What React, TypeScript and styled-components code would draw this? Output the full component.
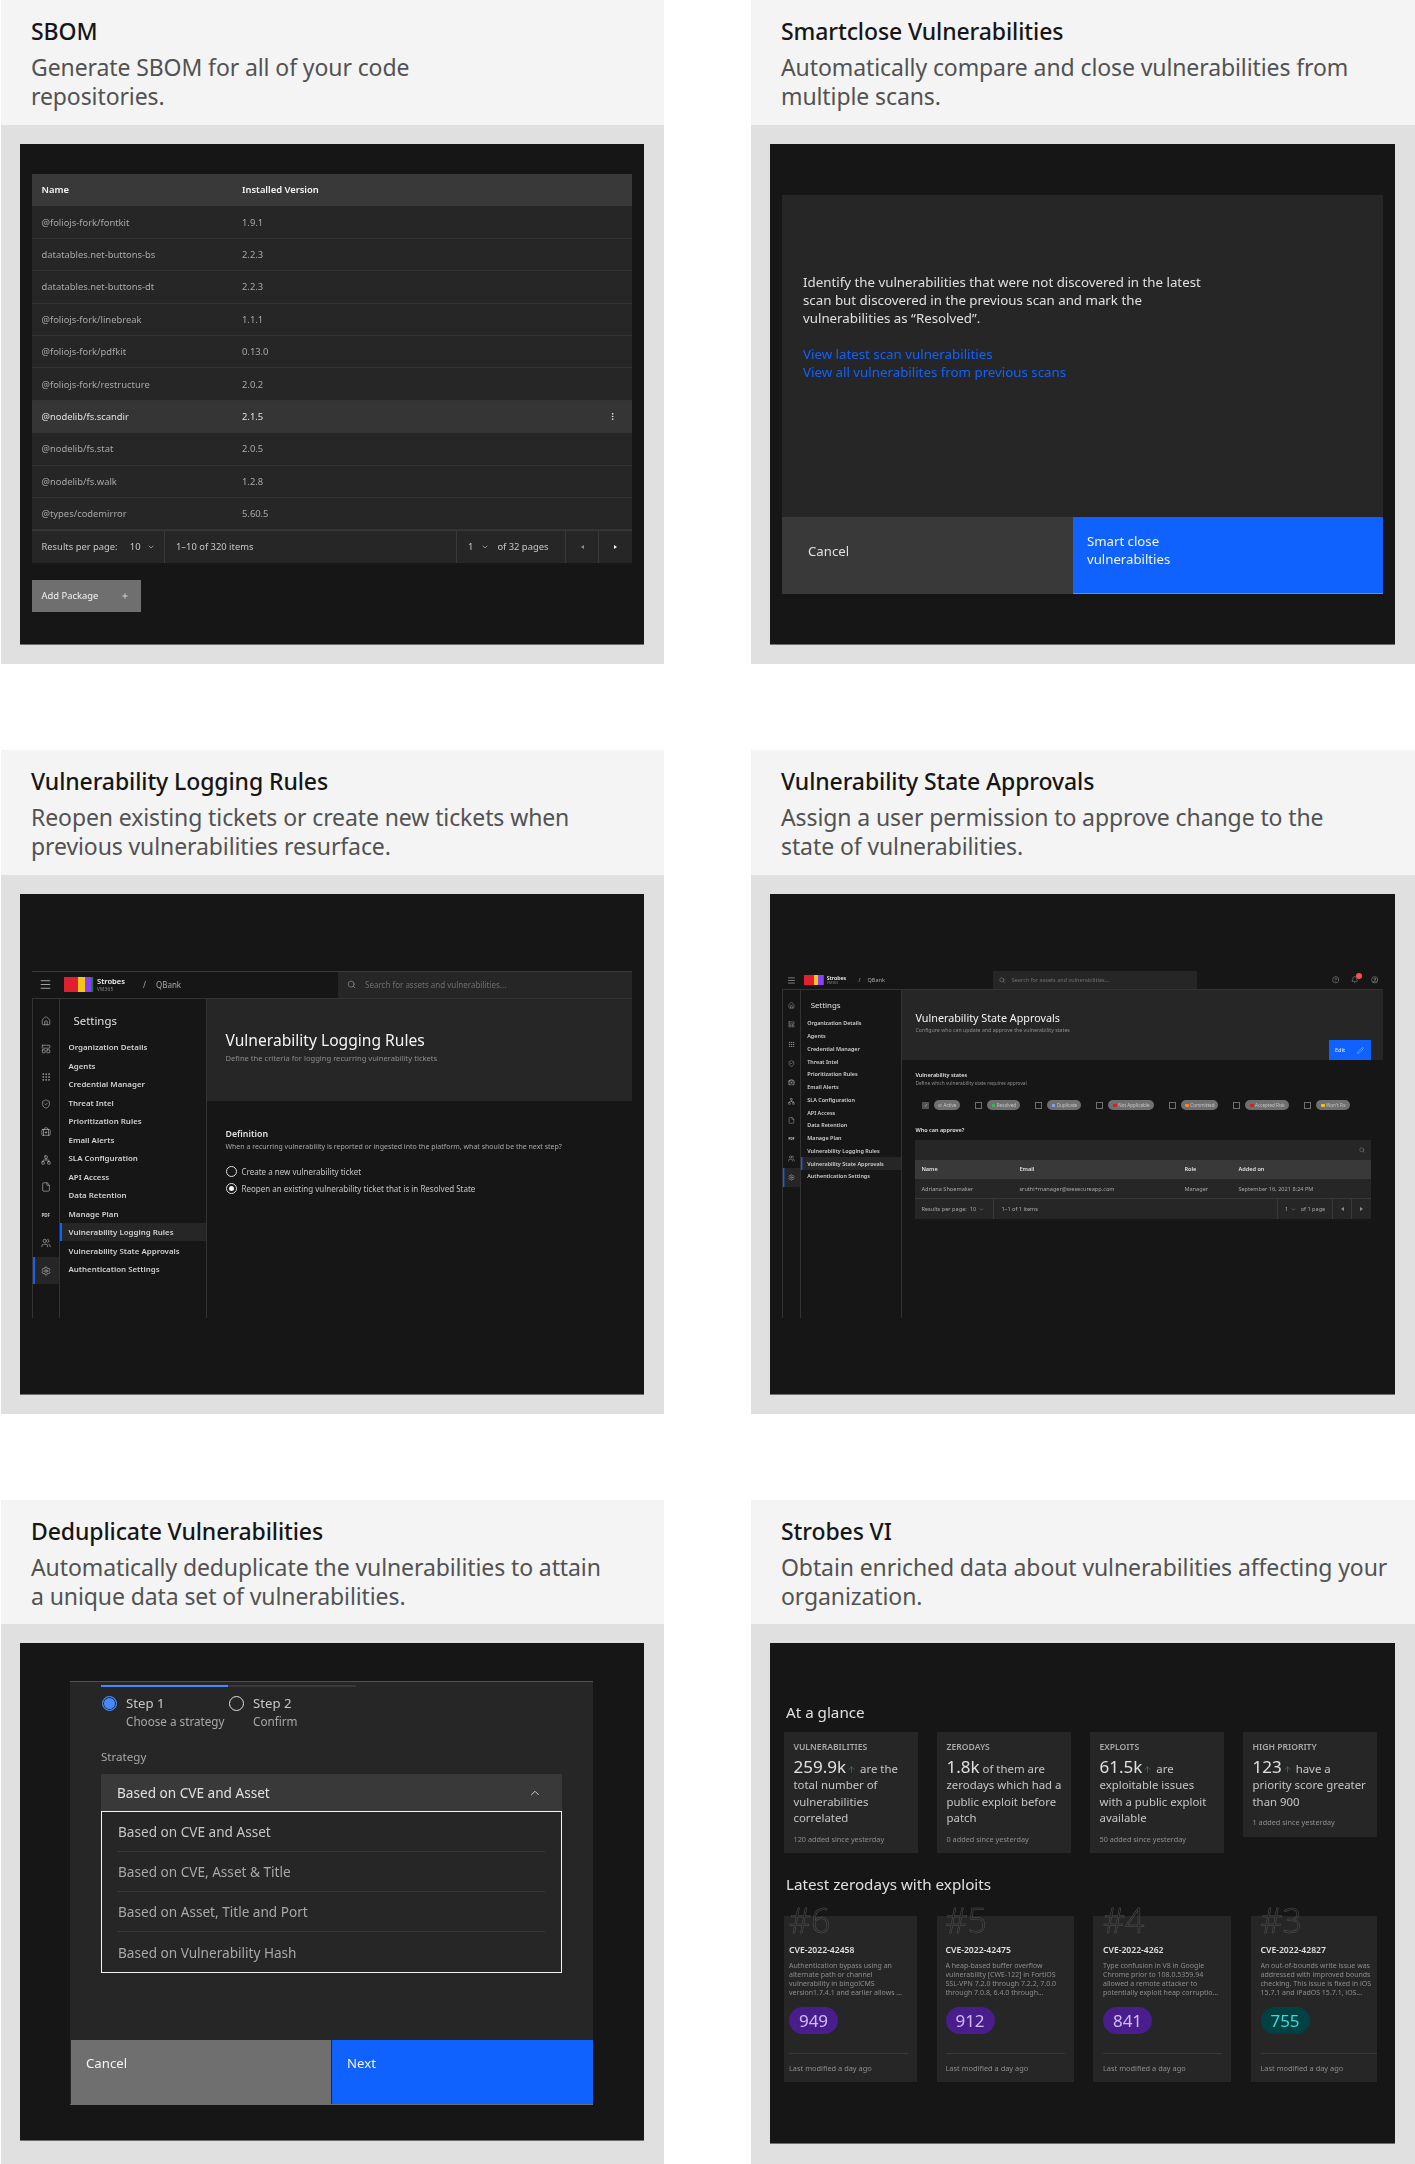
import type { ReactNode } from "react"
import styled, { createGlobalStyle } from "styled-components"
import {
  ArrowUp, Bell, ChevronDown, ChevronUp, CircleHelp, CircleUser, EllipsisVertical, File, Grip, Home, LayoutPanelTop,
  Menu, Network, Pencil, Plus, Search, Settings, ShieldCheck, BriefcaseMedical, Users,
} from "lucide-react"

const FONT = `"Noto Sans", "Open Sans", sans-serif`
const u = (n: number) => `calc(${n}px * var(--u))`

const Global = createGlobalStyle`
  html, body { margin: 0; padding: 0; background: #fff; }
  body { font-family: ${FONT}; }
  * { box-sizing: border-box; }
`

const Page = styled.div`
  width: 1415px; height: 2164px; padding-left: 1px; overflow: hidden;
  display: grid; grid-template-columns: 663px 664px; column-gap: 87px; row-gap: 86px;
  grid-template-rows: 664px 664px 664px;
`
const Card = styled.section`display: flex; flex-direction: column;`
const CardHead = styled.header<{ $last?: boolean }>`
  height: ${p => (p.$last ? 124 : 125)}px; background: #f4f4f4; padding: 18px 0 0 30px;
`
const CardTitle = styled.h2`
  margin: 0; font-size: 23px; line-height: 27px; font-weight: 500; color: #161616; letter-spacing: -0.1px;
`
const CardDesc = styled.p`
  margin: 8px 0 0; font-size: 23px; line-height: 29px; font-weight: 400; color: #525252; letter-spacing: -0.1px;
`
const Preview = styled.div`flex: 1; background: #e0e0e0; padding: 19px 20px 0 19px;`
const Panel = styled.div<{ $h?: number; $soft?: number }>`
  height: ${p => p.$h ?? 501}px; background: #161616; border-bottom: 1px solid #6f6f6f;
  filter: blur(${p => p.$soft ?? 0}px); overflow: hidden; position: relative;
`

/* SBOM */
const SbomWrap = styled(Panel)`padding: 30px 12px 0;`
const TRow = styled.div<{ $head?: boolean; $hover?: boolean }>`
  height: 32.4px; display: grid; grid-template-columns: 200.5px 1fr 40px; align-items: center; padding-left: 9.5px;
  font-size: 9.4px; font-weight: ${p => (p.$head ? 600 : 400)};
  background: ${p => (p.$head ? "#393939" : p.$hover ? "#353535" : "#262626")};
  color: ${p => (p.$head ? "#f4f4f4" : p.$hover ? "#e0e0e0" : "#a8a8a8")};
  border-bottom: 1px solid ${p => (p.$head ? "#393939" : "#333")};
  svg { justify-self: center; }
`
const Pager = styled.div`
  height: 32.4px; background: #262626; display: flex; align-items: center; font-size: 9.4px; color: #c6c6c6;
  border-top: 1px solid #393939;
`
const PagerCell = styled.div<{ $w?: number; $grow?: boolean; $pad?: number; $gap?: number }>`
  height: 100%; display: flex; align-items: center; padding-left: ${p => p.$pad ?? 0}px; gap: ${p => p.$gap ?? 6}px;
  ${p => (p.$w ? `width: ${p.$w}px;` : "")} ${p => (p.$grow ? "flex: 1;" : "")}
  border-right: 1px solid #393939;
  &:last-child { border-right: none; }
`
const Arrow = styled.span<{ $dir: "left" | "right"; $on?: boolean }>`
  width: 0; height: 0; border-top: 2.5px solid transparent; border-bottom: 2.5px solid transparent; margin: 0 auto;
  ${p => (p.$dir === "left"
    ? `border-right: 3px solid ${p.$on ? "#f4f4f4" : "#8d8d8d"};`
    : `border-left: 3px solid ${p.$on ? "#f4f4f4" : "#8d8d8d"};`)}
`
const AddBtn = styled.div`
  width: 109px; height: 32px; margin-top: 17px; background: #6f6f6f; color: #f4f4f4; font-size: 9.4px;
  display: flex; align-items: center; justify-content: space-between; padding: 0 12px 0 9.5px;
`

/* Smartclose */
const CloseWrap = styled(Panel)`padding: 51px 12px 0;`
const CloseBody = styled.div`
  height: 322px; background: #262626; padding: 78px 0 0 21px; font-size: 13.3px; line-height: 18px; color: #e0e0e0;
`
const LinkText = styled.div`color: #0f62fe; margin-top: 18px;`
const CloseFoot = styled.div`display: grid; grid-template-columns: 291px 310px; height: 77px;`
const GreyBtn = styled.div`
  background: #393939; color: #e0e0e0; font-size: 13.2px; display: flex; align-items: center; padding: 0 0 9px 26px;
`
const BlueBtn = styled.div`
  background: #0f62fe; color: #f4f4f4; font-size: 13.2px; line-height: 18px; padding: 15px 0 0 14px;
  border-bottom: 1px solid #8d8d8d;
`

/* settings shell, used at two sizes */
const Frame = styled.div<{ $scale: number }>`--u: ${p => p.$scale}; color: #f4f4f4;`
const ShellWrap = styled(Panel)`padding: 77px 12px 0;`
const TopBar = styled.div<{ $line?: boolean }>`
  height: ${u(27.5)}; display: flex; align-items: stretch;
  border-bottom: 1px solid #333; ${p => (p.$line ? "border-top: 1px solid #393939;" : "")}
`
const BarLeft = styled.div`width: ${u(306)}; display: flex; align-items: center; flex: none;`
const Burger = styled.div`width: ${u(27)}; display: flex; justify-content: center; color: #e0e0e0; flex: none;`
const Logo = styled.div`display: flex; width: ${u(29)}; height: ${u(15)}; margin-left: ${u(5)}; flex: none;`
const LogoBar = styled.span<{ $c: string; $w: number }>`background: ${p => p.$c}; width: ${p => p.$w}%;`
const Brand = styled.div`margin-left: ${u(4)}; width: ${u(46)}; flex: none;`
const BrandName = styled.div`font-size: ${u(7.6)}; line-height: ${u(9)}; font-weight: 600;`
const BrandSub = styled.div`font-size: ${u(4.6)}; line-height: ${u(6)}; color: #8d8d8d; letter-spacing: .3px;`
const Crumb = styled.div`font-size: ${u(8)}; color: #a8a8a8; display: flex; gap: ${u(10)};`
const SearchBox = styled.div<{ $fill: boolean }>`
  ${p => (p.$fill ? "flex: 1;" : `width: ${u(296)};`)}
  background: #262626; display: flex; align-items: center; gap: ${u(9)}; padding-left: ${u(9)};
  font-size: ${u(8)}; color: #6f6f6f; white-space: nowrap;
`
const TopIcons = styled.div`
  flex: 1; display: flex; justify-content: flex-end; align-items: center; gap: 12px; padding-right: 5px; color: #c6c6c6;
`
const BellWrap = styled.span`position: relative; display: flex;`
const BellBadge = styled.span`
  position: absolute; top: -3px; right: -3px; width: 6px; height: 6px; border-radius: 50%; background: #fa4d56;
`
const ShellBody = styled.div<{ $h: number }>`display: flex; height: ${p => p.$h}px;`
const Rail = styled.nav`
  width: ${u(27.5)}; flex: none; padding-top: ${u(9)}; border-left: 1px solid #333; border-right: 1px solid #333;
`
const RailItem = styled.div<{ $on?: boolean }>`
  height: ${u(27.7)}; display: flex; align-items: center; justify-content: center; color: #c6c6c6;
  font-size: ${u(4.6)}; font-weight: 700;
  ${p => (p.$on ? `background: #262626; box-shadow: inset ${u(2)} 0 0 #0f62fe;` : "")}
`
const Side = styled.aside`
  width: ${u(147)}; flex: none; border-right: 1px solid #333; padding-top: ${u(14)};
`
const SideTitle = styled.div`
  font-size: ${u(11.4)}; line-height: ${u(16)}; padding-left: ${u(14)}; margin-bottom: ${u(9.25)}; color: #e0e0e0;
`
const SideItem = styled.div<{ $on?: boolean }>`
  height: ${u(18.5)}; display: flex; align-items: center; padding-left: ${u(9)}; white-space: nowrap;
  font-size: ${u(7.9)}; font-weight: 600; color: #d0d0d0;
  ${p => (p.$on ? `background: #262626; box-shadow: inset ${u(2)} 0 0 #0f62fe;` : "")}
`
const Main = styled.main`flex: 1; min-width: 0;`
const MainHead = styled.div`
  height: ${u(102)}; background: #262626; padding: ${u(32)} 0 0 ${u(19)}; display: flex; justify-content: space-between;
`
const MainTitle = styled.h3`
  margin: 0; font-size: ${u(15.6)}; line-height: ${u(18)}; font-weight: 400; color: #f4f4f4; white-space: nowrap;
`
const MainSub = styled.p`
  margin: ${u(4)} 0 0; font-size: ${u(7.6)}; line-height: ${u(10)}; color: #8d8d8d; white-space: nowrap;
`
const EditBtn = styled.div`
  align-self: flex-end; width: 42px; height: 20px; margin-right: 12px; background: #0f62fe; color: #e0e0e0;
  font-size: 5.6px; font-weight: 500; display: flex; align-items: center; justify-content: space-between; padding: 0 7px 0 6px;
`

/* logging rules body */
const LogBody = styled.div`padding: 27px 0 0 19px;`
const DefTitle = styled.div`font-size: 8.8px; line-height: 12px; font-weight: 600; color: #e0e0e0;`
const DefText = styled.div`font-size: 7px; line-height: 12px; margin-top: 1px; color: #a8a8a8; white-space: nowrap;`
const RadioRow = styled.div<{ $first?: boolean }>`
  display: flex; align-items: center; gap: 5px; height: 17px; margin-top: ${p => (p.$first ? 10 : 0)}px;
  font-size: 8px; color: #c6c6c6;
`
const Radio = styled.span<{ $on?: boolean; $d?: number }>`
  width: ${p => p.$d ?? 11}px; height: ${p => p.$d ?? 11}px; border-radius: 50%; border: 1px solid #e0e0e0; flex: none;
  display: flex; align-items: center; justify-content: center;
  &::after { content: ""; width: 5px; height: 5px; border-radius: 50%; background: ${p => (p.$on ? "#f4f4f4" : "transparent")}; }
`

/* state approvals body */
const AppBody = styled.div`padding: 11px 12px 0 13px;`
const AppTitle = styled.div`font-size: 5.5px; line-height: 8px; font-weight: 600; color: #e0e0e0;`
const AppSub = styled.div`font-size: 4.8px; line-height: 7px; margin-top: 1px; color: #8d8d8d;`
const ChipRow = styled.div`display: flex; gap: 15px; align-items: center; padding-left: 7px; margin: 13px 0 16px;`
const ChipItem = styled.div`display: flex; align-items: center; gap: 5px;`
const CheckBox = styled.span<{ $on?: boolean }>`
  width: 7px; height: 7px; border: 1px solid ${p => (p.$on ? "#525252" : "#6f6f6f")}; background: ${p => (p.$on ? "#525252" : "transparent")};
  color: #a8a8a8; font-size: 5px; line-height: 5px; text-align: center;
`
const Chip = styled.span<{ $w: number }>`
  width: ${p => p.$w}px; height: 10px; border-radius: 5px; background: #6f6f6f; color: #c6c6c6; font-size: 4.6px;
  display: flex; align-items: center; justify-content: center; gap: 1.5px; white-space: nowrap;
`
const ChipDot = styled.span<{ $c: string }>`width: 3.6px; height: 3.6px; border-radius: 1px; background: ${p => p.$c};`
const MiniTool = styled.div`
  height: 19.5px; margin-top: 6px; background: #262626; display: flex; align-items: center; justify-content: flex-end;
  padding-right: 6px; color: #a8a8a8;
`
const MiniRow = styled.div<{ $head?: boolean }>`
  height: ${p => (p.$head ? 19.5 : 20)}px; display: grid; grid-template-columns: 98px 165px 54px 1fr; align-items: center; padding-left: 6px;
  font-size: 5.6px; white-space: nowrap; font-weight: ${p => (p.$head ? 600 : 400)};
  background: ${p => (p.$head ? "#393939" : "#262626")}; color: ${p => (p.$head ? "#e0e0e0" : "#a8a8a8")};
  border-bottom: 1px solid #393939;
`
const MiniPager = styled.div`
  height: 19.5px; background: #262626; display: flex; align-items: center; font-size: 5.6px; color: #a8a8a8; white-space: nowrap;
`
const MiniCell = styled.div<{ $w?: number; $grow?: boolean; $pad?: number }>`
  height: 100%; display: flex; align-items: center; padding-left: ${p => p.$pad ?? 0}px; gap: 3px;
  ${p => (p.$w ? `width: ${p.$w}px;` : "")} ${p => (p.$grow ? "flex: 1;" : "")}
  border-right: 1px solid #393939;
  &:last-child { border-right: none; }
`

/* dedupe */
const DedupeWrap = styled(Panel)`padding: 38px 51px 0 50px;`
const Wizard = styled.div`
  height: 424px; background: #262626; border-top: 1px solid #525252; border-bottom: 1px solid #6f6f6f; display: flex; flex-direction: column;
`
const Steps = styled.div`padding: 3px 0 0 31px; height: 358px;`
const Progress = styled.div`
  width: 255px; height: 2px; background: #393939;
  &::before { content: ""; display: block; width: 127px; height: 2px; background: #4589ff; }
`
const StepRow = styled.div`display: grid; grid-template-columns: 127px 127px; margin-top: 7px;`
const Step = styled.div`display: grid; grid-template-columns: 15px 1fr; column-gap: 9px; padding-left: 1px;`
const StepDot = styled.span<{ $on?: boolean }>`
  width: 15px; height: 15px; border-radius: 50%; border: 1px solid ${p => (p.$on ? "#4589ff" : "#e0e0e0")};
  background: ${p => (p.$on ? "#4589ff" : "transparent")}; margin-top: 2px;
  ${p => (p.$on ? "box-shadow: inset 0 0 0 1px #262626;" : "")}
`
const StepName = styled.div`font-size: 13.2px; line-height: 19px; color: #c6c6c6;`
const StepSub = styled.div`grid-column: 2; font-size: 11.7px; line-height: 17px; color: #a8a8a8; white-space: nowrap;`
const FieldLabel = styled.div`font-size: 11.6px; line-height: 14px; margin-top: 20px; color: #a8a8a8;`
const SelectBox = styled.div`
  width: 461px; height: 37px; margin-top: 10px; background: #393939; color: #e0e0e0; font-size: 13.6px;
  display: flex; align-items: center; justify-content: space-between; padding: 0 20px 0 16px;
`
const Menulist = styled.div`width: 461px; height: 162px; border: 1px solid #f4f4f4; padding: 0 16px;`
const Option = styled.div<{ $first?: boolean }>`
  height: 40px; display: flex; align-items: center; font-size: 13.6px; color: ${p => (p.$first ? "#c6c6c6" : "#a8a8a8")};
  border-bottom: 1px solid #393939;
  &:last-child { border-bottom: none; }
`
const WizardFoot = styled.div`display: grid; grid-template-columns: 260px 1fr; column-gap: 1px; height: 64px; margin-left: 1px;`
const WizBtn = styled.div<{ $blue?: boolean }>`
  background: ${p => (p.$blue ? "#0f62fe" : "#6f6f6f")}; color: #f4f4f4; font-size: 13.2px; line-height: 19px; padding: 14px 0 0 15px;
`

/* Strobes VI */
const ViWrap = styled(Panel)`padding: 60px 0 0 14px;`
const ViHead = styled.h4<{ $top?: number }>`
  margin: ${p => p.$top ?? 0}px 0 0 2px; font-size: 15.2px; line-height: 18px; font-weight: 400; color: #e0e0e0;
`
const Glance = styled.div`
  display: grid; grid-template-columns: repeat(4, 133.5px); column-gap: 19.5px; align-items: start; margin-top: 11px;
`
const GlanceCard = styled.div`background: #262626; padding: 10px 6px 9px 9.5px;`
const GlanceLabel = styled.div`font-size: 8.6px; line-height: 10px; font-weight: 600; color: #a8a8a8;`
const GlanceText = styled.div`margin-top: 7px; font-size: 11.4px; line-height: 16.4px; color: #c6c6c6; white-space: nowrap;`
const BigNum = styled.span`font-size: 17px; color: #e0e0e0;`
const Up = styled(ArrowUp)`color: #24a148; margin: 0 4px 0 1px; vertical-align: -1px;`
const GlanceNote = styled.div`margin-top: 8px; font-size: 7.3px; line-height: 9.5px; color: #8d8d8d; white-space: nowrap;`
const Zero = styled.div`
  display: grid; grid-template-columns: 133px 137px 138px 126px; column-gap: 19.5px; margin-top: 23px; align-items: start;
`
const ZeroCard = styled.div<{ $pad: number }>`
  position: relative; height: 166px; background: #262626; padding: 29px 0 0 ${p => p.$pad}px; overflow: visible;
`
const Rank = styled.span<{ $left: number }>`
  position: absolute; left: ${p => p.$left}px; top: -16px; font-size: 34px; line-height: 40px;
  color: transparent; -webkit-text-stroke: 0.5px #555; font-weight: 300;
`
const ZeroInner = styled.div`width: 119px;`
const ZeroClip = styled.div`overflow: hidden; margin-right: 0;`
const Cve = styled.div`font-size: 8.6px; line-height: 10px; font-weight: 600; color: #e0e0e0;`
const ZeroDesc = styled.div`
  margin-top: 5.4px; font-size: 7px; line-height: 9.3px; color: #8d8d8d; white-space: nowrap;
`
const Score = styled.div<{ $teal?: boolean }>`
  width: 49px; height: 27px; border-radius: 14px; margin-top: 9.4px; font-size: 17px;
  display: flex; align-items: center; justify-content: center;
  background: ${p => (p.$teal ? "#004144" : "#491d8b")}; color: ${p => (p.$teal ? "#3ddbd9" : "#d4bbff")};
`
const ZeroFoot = styled.div`
  margin-top: 19px; border-top: 1px solid #393939; padding-top: 9px; font-size: 7.4px; line-height: 10px; color: #8d8d8d; white-space: nowrap;
`

const packages = [
  ["@foliojs-fork/fontkit", "1.9.1"],
  ["datatables.net-buttons-bs", "2.2.3"],
  ["datatables.net-buttons-dt", "2.2.3"],
  ["@foliojs-fork/linebreak", "1.1.1"],
  ["@foliojs-fork/pdfkit", "0.13.0"],
  ["@foliojs-fork/restructure", "2.0.2"],
  ["@nodelib/fs.scandir", "2.1.5"],
  ["@nodelib/fs.stat", "2.0.5"],
  ["@nodelib/fs.walk", "1.2.8"],
  ["@types/codemirror", "5.60.5"],
]

const settingsMenu = [
  "Organization Details", "Agents", "Credential Manager", "Threat Intel", "Prioritization Rules", "Email Alerts",
  "SLA Configuration", "API Access", "Data Retention", "Manage Plan", "Vulnerability Logging Rules",
  "Vulnerability State Approvals", "Authentication Settings",
]

const states = [
  { name: "Active", w: 26, c: "#8d8d8d" },
  { name: "Resolved", w: 33, c: "#24c648" },
  { name: "Duplicate", w: 34, c: "#78a9ff" },
  { name: "Not Applicable", w: 46, c: "#da1e28" },
  { name: "Committed", w: 37, c: "#ff832b" },
  { name: "Accepted Risk", w: 44, c: "#da1e28" },
  { name: "Won't Fix", w: 34, c: "#f1c21b" },
]

const glance = [
  { label: "VULNERABILITIES", num: "259.9k", up: true, lines: ["are the", "total number of", "vulnerabilities", "correlated"], note: "120 added since yesterday" },
  { label: "ZERODAYS", num: "1.8k", up: false, lines: ["of them are", "zerodays which had a", "public exploit before", "patch"], note: "0 added since yesterday" },
  { label: "EXPLOITS", num: "61.5k", up: true, lines: ["are", "exploitable issues", "with a public exploit", "available"], note: "50 added since yesterday" },
  { label: "HIGH PRIORITY", num: "123", up: true, lines: ["have a", "priority score greater", "than 900"], note: "1 added since yesterday" },
]

const zerodays = [
  { rank: "#6", pad: 5, cve: "CVE-2022-42458", score: 949, desc: ["Authentication bypass using an", "alternate path or channel", "vulnerability in bingo!CMS", "version1.7.4.1 and earlier allows ..."] },
  { rank: "#5", pad: 9, cve: "CVE-2022-42475", score: 912, desc: ["A heap-based buffer overflow", "vulnerability [CWE-122] in FortiOS", "SSL-VPN 7.2.0 through 7.2.2, 7.0.0", "through 7.0.8, 6.4.0 through..."] },
  { rank: "#4", pad: 10, cve: "CVE-2022-4262", score: 841, desc: ["Type confusion in V8 in Google", "Chrome prior to 108.0.5359.94", "allowed a remote attacker to", "potentially exploit heap corruptio..."] },
  { rank: "#3", pad: 10, cve: "CVE-2022-42827", score: 755, teal: true, desc: ["An out-of-bounds write issue was", "addressed with improved bounds", "checking. This issue is fixed in iOS", "15.7.1 and iPadOS 15.7.1, iOS..."] },
]

function SettingsShell(props: {
  scale: number; height: number; soft: number; search: string; title: string; sub: string; active: number
  wide: boolean; action?: ReactNode; children: ReactNode
}) {
  const s = props.scale
  const ic = 10 * s
  const railIcons = [
    <Home size={ic} strokeWidth={1.4} />, <LayoutPanelTop size={ic} strokeWidth={1.4} />, <Grip size={ic} strokeWidth={1.4} />,
    <ShieldCheck size={ic} strokeWidth={1.4} />, <BriefcaseMedical size={ic} strokeWidth={1.4} />, <Network size={ic} strokeWidth={1.4} />,
    <File size={ic} strokeWidth={1.4} />, "PDF", <Users size={ic} strokeWidth={1.4} />, <Settings size={ic} strokeWidth={1.4} />,
  ]
  return (
    <ShellWrap $soft={props.soft}>
      <Frame $scale={s}>
        <TopBar $line={props.wide}>
          <BarLeft>
            <Burger><Menu size={13 * s} strokeWidth={1.3} /></Burger>
            <Logo>
              <LogoBar $c="#e0202e" $w={48} />
              <LogoBar $c="#f5c518" $w={24} />
              <LogoBar $c="#8a3ffc" $w={21} />
              <LogoBar $c="#198038" $w={7} />
            </Logo>
            <Brand>
              <BrandName>Strobes</BrandName>
              <BrandSub>VM365</BrandSub>
            </Brand>
            <Crumb><span>/</span><span>QBank</span></Crumb>
          </BarLeft>
          <SearchBox $fill={props.wide}>
            <Search size={9 * s} strokeWidth={1.5} color="#a8a8a8" />
            {props.search}
          </SearchBox>
          {!props.wide && (
            <TopIcons>
              <CircleHelp size={7.5} strokeWidth={1.2} />
              <BellWrap><Bell size={7.5} strokeWidth={1.2} /><BellBadge /></BellWrap>
              <CircleUser size={7.5} strokeWidth={1.2} />
            </TopIcons>
          )}
        </TopBar>
        <ShellBody $h={props.height}>
          <Rail>
            {railIcons.map((icon, i) => <RailItem key={i} $on={i === 9}>{icon}</RailItem>)}
          </Rail>
          <Side>
            <SideTitle>Settings</SideTitle>
            {settingsMenu.map((item, i) => <SideItem key={item} $on={i === props.active}>{item}</SideItem>)}
          </Side>
          <Main>
            <MainHead>
              <div>
                <MainTitle>{props.title}</MainTitle>
                <MainSub>{props.sub}</MainSub>
              </div>
              {props.action}
            </MainHead>
            {props.children}
          </Main>
        </ShellBody>
      </Frame>
    </ShellWrap>
  )
}

export default function App() {
  return (
    <>
      <Global />
      <Page>
        <Card>
          <CardHead>
            <CardTitle>SBOM</CardTitle>
            <CardDesc>Generate SBOM for all of your code<br />repositories.</CardDesc>
          </CardHead>
          <Preview>
            <SbomWrap $soft={0.3}>
              <TRow $head><span>Name</span><span>Installed Version</span></TRow>
              {packages.map(([name, version], i) => (
                <TRow key={name} $hover={i === 6}>
                  <span>{name}</span>
                  <span>{version}</span>
                  {i === 6 && <EllipsisVertical size={9} color="#f4f4f4" />}
                </TRow>
              ))}
              <Pager>
                <PagerCell $w={133} $pad={9.5}>
                  Results per page:&nbsp;&nbsp;&nbsp;&nbsp;&nbsp;10 <ChevronDown size={8} />
                </PagerCell>
                <PagerCell $grow $pad={11}>1–10 of 320 items</PagerCell>
                <PagerCell $w={109} $pad={11} $gap={8}>1 <ChevronDown size={8} /> of 32 pages</PagerCell>
                <PagerCell $w={33}><Arrow $dir="left" /></PagerCell>
                <PagerCell $w={33}><Arrow $dir="right" $on /></PagerCell>
              </Pager>
              <AddBtn>Add Package <Plus size={8} /></AddBtn>
            </SbomWrap>
          </Preview>
        </Card>

        <Card>
          <CardHead>
            <CardTitle>Smartclose Vulnerabilities</CardTitle>
            <CardDesc>Automatically compare and close vulnerabilities from<br />multiple scans.</CardDesc>
          </CardHead>
          <Preview>
            <CloseWrap>
              <CloseBody>
                Identify the vulnerabilities that were not discovered in the latest<br />
                scan but discovered in the previous scan and mark the<br />
                vulnerabilities as “Resolved”.
                <LinkText>View latest scan vulnerabilities<br />View all vulnerabilites from previous scans</LinkText>
              </CloseBody>
              <CloseFoot>
                <GreyBtn>Cancel</GreyBtn>
                <BlueBtn>Smart close<br />vulnerabilties</BlueBtn>
              </CloseFoot>
            </CloseWrap>
          </Preview>
        </Card>

        <Card>
          <CardHead>
            <CardTitle>Vulnerability Logging Rules</CardTitle>
            <CardDesc>Reopen existing tickets or create new tickets when<br />previous vulnerabilities resurface.</CardDesc>
          </CardHead>
          <Preview>
            <SettingsShell
              scale={1} height={319} soft={0.35} wide active={10}
              search="Search for assets and vulnerabilities..."
              title="Vulnerability Logging Rules"
              sub="Define the criteria for logging recurring vulnerability tickets"
            >
              <LogBody>
                <DefTitle>Definition</DefTitle>
                <DefText>When a recurring vulnerability is reported or ingested into the platform, what should be the next step?</DefText>
                <RadioRow $first><Radio />Create a new vulnerability ticket</RadioRow>
                <RadioRow><Radio $on />Reopen an existing vulnerability ticket that is in Resolved State</RadioRow>
              </LogBody>
            </SettingsShell>
          </Preview>
        </Card>

        <Card>
          <CardHead>
            <CardTitle>Vulnerability State Approvals</CardTitle>
            <CardDesc>Assign a user permission to approve change to the<br />state of vulnerabilities.</CardDesc>
          </CardHead>
          <Preview>
            <SettingsShell
              scale={0.69} height={328} soft={0.45} wide={false} active={11}
              search="Search for assets and vulnerabilities..."
              title="Vulnerability State Approvals"
              sub="Configure who can update and approve the vulnerability states"
              action={<EditBtn>Edit <Pencil size={7} strokeWidth={1.3} /></EditBtn>}
            >
              <AppBody>
                <AppTitle>Vulnerability states</AppTitle>
                <AppSub>Define which vulnerability state requires approval</AppSub>
                <ChipRow>
                  {states.map((st, i) => (
                    <ChipItem key={st.name}>
                      <CheckBox $on={i === 0}>{i === 0 ? "✓" : ""}</CheckBox>
                      <Chip $w={st.w}><ChipDot $c={st.c} />{st.name}</Chip>
                    </ChipItem>
                  ))}
                </ChipRow>
                <AppTitle>Who can approve?</AppTitle>
                <MiniTool><Search size={6} strokeWidth={1.4} /></MiniTool>
                <MiniRow $head><span>Name</span><span>Email</span><span>Role</span><span>Added on</span></MiniRow>
                <MiniRow>
                  <span>Adriana Shoemaker</span>
                  <span>sruthi+manager@wesecureapp.com</span>
                  <span>Manager</span>
                  <span>September 16, 2021 8:24 PM</span>
                </MiniRow>
                <MiniPager>
                  <MiniCell $w={79} $pad={6}>Results per page:&nbsp;&nbsp;10 <ChevronDown size={5} /></MiniCell>
                  <MiniCell $grow $pad={7}>1–1 of 1 items</MiniCell>
                  <MiniCell $w={55} $pad={7}>1 <ChevronDown size={5} />&nbsp;of 1 page</MiniCell>
                  <MiniCell $w={19}><Arrow $dir="left" /></MiniCell>
                  <MiniCell $w={19}><Arrow $dir="right" /></MiniCell>
                </MiniPager>
              </AppBody>
            </SettingsShell>
          </Preview>
        </Card>

        <Card>
          <CardHead $last>
            <CardTitle>Deduplicate Vulnerabilities</CardTitle>
            <CardDesc>Automatically deduplicate the vulnerabilities to attain<br />a unique data set of vulnerabilities.</CardDesc>
          </CardHead>
          <Preview>
            <DedupeWrap $h={498}>
              <Wizard>
                <Steps>
                  <Progress />
                  <StepRow>
                    <Step>
                      <StepDot $on /><StepName>Step 1</StepName>
                      <StepSub>Choose a strategy</StepSub>
                    </Step>
                    <Step>
                      <StepDot /><StepName>Step 2</StepName>
                      <StepSub>Confirm</StepSub>
                    </Step>
                  </StepRow>
                  <FieldLabel>Strategy</FieldLabel>
                  <SelectBox>Based on CVE and Asset <ChevronUp size={14} strokeWidth={1.5} /></SelectBox>
                  <Menulist>
                    <Option $first>Based on CVE and Asset</Option>
                    <Option>Based on CVE, Asset &amp; Title</Option>
                    <Option>Based on Asset, Title and Port</Option>
                    <Option>Based on Vulnerability Hash</Option>
                  </Menulist>
                </Steps>
                <WizardFoot>
                  <WizBtn>Cancel</WizBtn>
                  <WizBtn $blue>Next</WizBtn>
                </WizardFoot>
              </Wizard>
            </DedupeWrap>
          </Preview>
        </Card>

        <Card>
          <CardHead $last>
            <CardTitle>Strobes VI</CardTitle>
            <CardDesc>Obtain enriched data about vulnerabilities affecting your<br />organization.</CardDesc>
          </CardHead>
          <Preview>
            <ViWrap $soft={0.4}>
              <ViHead>At a glance</ViHead>
              <Glance>
                {glance.map(g => (
                  <GlanceCard key={g.label}>
                    <GlanceLabel>{g.label}</GlanceLabel>
                    <GlanceText>
                      <BigNum>{g.num}</BigNum>
                      {g.up ? <Up size={9} strokeWidth={1.6} /> : " "}
                      {g.lines.map((line, i) => <span key={line}>{i > 0 && <br />}{line}</span>)}
                    </GlanceText>
                    <GlanceNote>{g.note}</GlanceNote>
                  </GlanceCard>
                ))}
              </Glance>
              <ViHead $top={22}>Latest zerodays with exploits</ViHead>
              <Zero>
                {zerodays.map(z => (
                  <ZeroCard key={z.cve} $pad={z.pad}>
                    <Rank $left={z.pad}>{z.rank}</Rank>
                    <ZeroClip>
                      <ZeroInner>
                        <Cve>{z.cve}</Cve>
                        <ZeroDesc>{z.desc.map((line, i) => <span key={line}>{i > 0 && <br />}{line}</span>)}</ZeroDesc>
                        <Score $teal={z.teal}>{z.score}</Score>
                        <ZeroFoot>Last modified a day ago</ZeroFoot>
                      </ZeroInner>
                    </ZeroClip>
                  </ZeroCard>
                ))}
              </Zero>
            </ViWrap>
          </Preview>
        </Card>
      </Page>
    </>
  )
}
